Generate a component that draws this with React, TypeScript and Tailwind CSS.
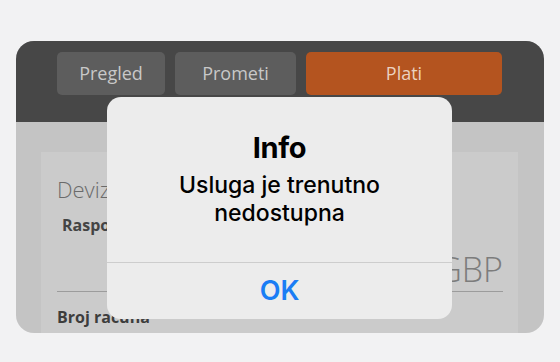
const TABS = [
  { label: 'Pregled', width: 'w-[108px]', active: false },
  { label: 'Prometi', width: 'w-[121px]', active: false },
  { label: 'Plati', width: 'w-[196px]', active: true },
]

function Tab({ label, width, active }: { label: string; width: string; active: boolean }) {
  return (
    <div
      className={`${width} h-[43px] rounded-[5px] flex items-center justify-center text-[18px] ${
        active ? 'bg-[#b4541f] text-[#ebd2c0]' : 'bg-[#5d5d5d] text-[#c8c8c8]'
      }`}
    >
      {label}
    </div>
  )
}

function AlertDialog() {
  return (
    <div
      className="absolute left-[107px] top-[97px] w-[345px] h-[222px] rounded-[14px] bg-[#ececec] flex flex-col"
      style={{ fontFamily: 'Inter, "Noto Sans", sans-serif' }}
    >
      <div className="flex-1 flex flex-col items-center pt-[34px] text-black">
        <div className="text-[29px] leading-[34px] font-bold tracking-[-0.3px]">Info</div>
        <div className="mt-[6px] text-[23px] leading-[28px] font-medium text-center">
          Usluga je trenutno
          <br />
          nedostupna
        </div>
      </div>
      <div className="h-[57px] border-t border-[#cdcdcd] flex items-center justify-center text-[27px] font-semibold text-[#1a7df5]">
        OK
      </div>
    </div>
  )
}

export default function App() {
  return (
    <div
      className="relative w-[560px] h-[362px] bg-[#f2f2f3] pt-[41px] px-[16px] overflow-hidden"
      style={{ fontFamily: '"Open Sans", "Noto Sans", sans-serif' }}
    >
      <div className="h-[292px] rounded-[18px] overflow-hidden bg-[#c4c4c4] flex flex-col">
        <div className="h-[81px] bg-[#474747] pt-[11px] pl-[41px] flex gap-[10px] shrink-0">
          {TABS.map(t => (
            <Tab key={t.label} {...t} />
          ))}
        </div>
        <div className="flex-1 pt-[30px] pl-[25px] pr-[26px] flex flex-col">
          <div className="flex-1 bg-[#cbcbcb] pl-[16px] pr-[15px] pt-[22px]">
            <div className="text-[22px] leading-[30px] font-light text-[#6a6a6a]">Devizni račun</div>
            <div className="mt-[9px] pl-[5px] text-[16px] leading-[24px] font-bold text-[#444]">Raspoloživo</div>
            <div className="mt-[5px] h-[50px] pb-[2px] border-b border-[#9c9c9c] flex items-end justify-end text-[34px] leading-[40px] font-light text-[#7c7c7c]">
              GBP
            </div>
            <div className="mt-[13px] text-[16px] leading-[24px] font-bold text-[#3d3d3d]">Broj računa</div>
          </div>
        </div>
      </div>
      <AlertDialog />
    </div>
  )
}
